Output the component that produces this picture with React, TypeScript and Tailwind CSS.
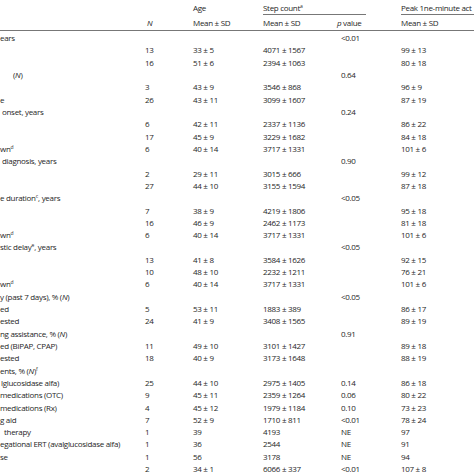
import React from 'react';

type Row = {
  label?: React.ReactNode;
  indent?: string;
  n?: string;
  age?: string;
  step?: string;
  p?: string;
  peak?: string;
};

const N = () => <span className="italic">N</span>;
// small raised footnote letter, kept inline so it hugs the word
const Sup = ({ c }: { c: string }) => (
  <span className="relative -top-[3px] text-[5px] leading-none tracking-normal">{c}</span>
);

const rows: Row[] = [
  { label: 'ears', p: '<0.01' },
  { n: '13', age: '33 ± 5', step: '4071 ± 1567', peak: '99 ± 13' },
  { n: '16', age: '51 ± 6', step: '2394 ± 1063', peak: '80 ± 18' },
  { label: <>(<N />)</>, indent: 'pl-[13px]', p: '0.64' },
  { n: '3', age: '43 ± 9', step: '3546 ± 868', peak: '96 ± 9' },
  { label: 'e', n: '26', age: '43 ± 11', step: '3099 ± 1607', peak: '87 ± 19' },
  { label: 'onset, years', indent: 'pl-[2px]', p: '0.24' },
  { n: '6', age: '42 ± 11', step: '2337 ± 1136', peak: '86 ± 22' },
  { n: '17', age: '45 ± 9', step: '3229 ± 1682', peak: '84 ± 18' },
  { label: <>wn<Sup c="d" /></>, n: '6', age: '40 ± 14', step: '3717 ± 1331', peak: '101 ± 6' },
  { label: 'diagnosis, years', indent: 'pl-[2px]', p: '0.90' },
  { n: '2', age: '29 ± 11', step: '3015 ± 666', peak: '99 ± 12' },
  { n: '27', age: '44 ± 10', step: '3155 ± 1594', peak: '87 ± 18' },
  { label: <>e duration<Sup c="c" />, years</>, p: '<0.05' },
  { n: '7', age: '38 ± 9', step: '4219 ± 1806', peak: '95 ± 18' },
  { n: '16', age: '46 ± 9', step: '2462 ± 1173', peak: '81 ± 18' },
  { label: <>wn<Sup c="d" /></>, n: '6', age: '40 ± 14', step: '3717 ± 1331', peak: '101 ± 6' },
  { label: <>stic delay<Sup c="e" />, years</>, p: '<0.05' },
  { n: '13', age: '41 ± 8', step: '3584 ± 1626', peak: '92 ± 15' },
  { n: '10', age: '48 ± 10', step: '2232 ± 1211', peak: '76 ± 21' },
  { label: <>wn<Sup c="d" /></>, n: '6', age: '40 ± 14', step: '3717 ± 1331', peak: '101 ± 6' },
  { label: <>y (past 7 days), % (<N />)</>, p: '<0.05' },
  { label: 'ed', n: '5', age: '53 ± 11', step: '1883 ± 389', peak: '86 ± 17' },
  { label: 'ested', n: '24', age: '41 ± 9', step: '3408 ± 1565', peak: '89 ± 19' },
  { label: <>ng assistance, % (<N />)</>, p: '0.91' },
  { label: 'ed (BiPAP, CPAP)', n: '11', age: '49 ± 10', step: '3101 ± 1427', peak: '89 ± 18' },
  { label: 'ested', n: '18', age: '40 ± 9', step: '3173 ± 1648', peak: '88 ± 19' },
  { label: <>ents, % (<N />)<Sup c="f" /></> },
  { label: 'lglucosidase alfa)', indent: 'pl-px', n: '25', age: '44 ± 10', step: '2975 ± 1405', p: '0.14', peak: '86 ± 18' },
  { label: 'medications (OTC)', n: '9', age: '45 ± 11', step: '2359 ± 1264', p: '0.06', peak: '80 ± 22' },
  { label: 'medications (Rx)', n: '4', age: '45 ± 12', step: '1979 ± 1184', p: '0.10', peak: '73 ± 23' },
  { label: 'g aid', n: '7', age: '52 ± 9', step: '1710 ± 811', p: '<0.01', peak: '78 ± 24' },
  { label: 'therapy', indent: 'pl-[4px]', n: '1', age: '39', step: '4193', p: 'NE', peak: '97' },
  { label: 'egational ERT (avalglucosidase alfa)', n: '1', age: '36', step: '2544', p: 'NE', peak: '91' },
  { label: 'se', n: '1', age: '56', step: '3178', p: 'NE', peak: '94' },
  { n: '2', age: '34 ± 1', step: '6066 ± 337', p: '<0.01', peak: '107 ± 8' },
];

const cols = 'grid grid-cols-[145px_48px_70px_77px_61px_1fr]';

export default function App() {
  return (
    <div
      className="w-[474px] h-[474px] overflow-hidden bg-white text-[8px] tracking-[-0.3px] text-[#262626] whitespace-nowrap"
      style={{ fontFamily: '"Open Sans", "Noto Sans", sans-serif' }}
    >
      <div className={`${cols} h-[15px]`}>
        <div />
        <div />
        <div className="pt-[2px]">Age</div>
        <div className="col-span-2 mr-[35px] border-b border-[#777] pt-[2px]">
          Step count<Sup c="a" />
        </div>
        <div className="overflow-hidden border-b border-[#777] pt-[2px]">Peak 1ne-minute act</div>
      </div>
      <div className={`${cols} h-[16px] items-center border-b border-[#777]`}>
        <div />
        <div className="pl-[2px]">
          <N />
        </div>
        <div>Mean ± SD</div>
        <div>Mean ± SD</div>
        <div className="-ml-[3px]">
          <span className="italic">p</span> value
        </div>
        <div>Mean ± SD</div>
      </div>
      <div className="pt-[1px]">
        {rows.map((r, i) => (
          <div key={i} className={`${cols} h-[12.32px] items-center`}>
            <div className={r.indent}>{r.label}</div>
            <div>{r.n}</div>
            <div>{r.age}</div>
            <div>{r.step}</div>
            <div className="pl-px">{r.p}</div>
            <div>{r.peak}</div>
          </div>
        ))}
      </div>
    </div>
  );
}
